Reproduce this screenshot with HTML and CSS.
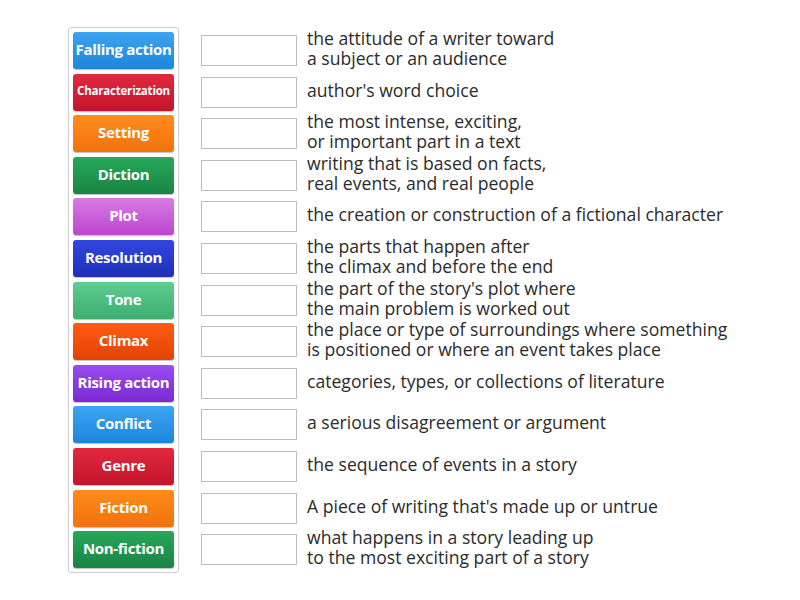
FILE: index.html
```html
<!DOCTYPE html>
<html>
<head>
<meta charset="utf-8">
<link rel="stylesheet" href="styles.css">
</head>
<body>
<div class="game">
  <div class="panel">
    <div class="tile c-blue">Falling action</div>
    <div class="tile c-red small">Characterization</div>
    <div class="tile c-orange">Setting</div>
    <div class="tile c-green">Diction</div>
    <div class="tile c-violet">Plot</div>
    <div class="tile c-navy">Resolution</div>
    <div class="tile c-mint">Tone</div>
    <div class="tile c-redorange">Climax</div>
    <div class="tile c-purple">Rising action</div>
    <div class="tile c-blue">Conflict</div>
    <div class="tile c-red">Genre</div>
    <div class="tile c-orange">Fiction</div>
    <div class="tile c-green">Non-fiction</div>
  </div>
  <div class="rows">
    <div class="row"><div class="slot"></div><div class="desc">the attitude of a writer toward<br>a subject or an audience</div></div>
    <div class="row"><div class="slot"></div><div class="desc">author's word choice</div></div>
    <div class="row"><div class="slot"></div><div class="desc">the most intense, exciting,<br>or important part in a text</div></div>
    <div class="row"><div class="slot"></div><div class="desc">writing that is based on facts,<br>real events, and real people</div></div>
    <div class="row"><div class="slot"></div><div class="desc">the creation or construction of a fictional character</div></div>
    <div class="row"><div class="slot"></div><div class="desc">the parts that happen after<br>the climax and before the end</div></div>
    <div class="row"><div class="slot"></div><div class="desc">the part of the story's plot where<br>the main problem is worked out</div></div>
    <div class="row"><div class="slot"></div><div class="desc">the place or type of surroundings where something<br>is positioned or where an event takes place</div></div>
    <div class="row"><div class="slot"></div><div class="desc">categories, types, or collections of literature</div></div>
    <div class="row"><div class="slot"></div><div class="desc">a serious disagreement or argument</div></div>
    <div class="row"><div class="slot"></div><div class="desc">the sequence of events in a story</div></div>
    <div class="row"><div class="slot"></div><div class="desc">A piece of writing that's made up or untrue</div></div>
    <div class="row"><div class="slot"></div><div class="desc">what happens in a story leading up<br>to the most exciting part of a story</div></div>
  </div>
</div>
</body>
</html>
```

FILE: styles.css
```css
html, body {
  margin: 0;
  padding: 0;
  background: #ffffff;
}

.game {
  display: flex;
  align-items: flex-start;
  padding: 27px 0 0 68px;
  font-family: "Open Sans", "Liberation Sans", sans-serif;
}

.panel {
  width: 101px;
  padding: 4px;
  border: 1px solid #cfcfcf;
  border-radius: 3px;
  display: flex;
  flex-direction: column;
  gap: 4.6px;
  box-shadow: 0 1px 2px rgba(0,0,0,0.08);
}

.tile {
  height: 37px;
  box-sizing: border-box;
  padding-bottom: 3px;
  border-radius: 3px;
  display: flex;
  align-items: center;
  justify-content: center;
  color: #ffffff;
  font-weight: 700;
  font-size: 15px;
  letter-spacing: -0.3px;
  white-space: nowrap;
  box-shadow: 0 1px 1px rgba(0,0,0,0.25);
}

.tile.small {
  font-size: 11.5px;
  letter-spacing: -0.2px;
}

.c-blue { background: linear-gradient(#3ea4f0, #1c86dc); }
.c-red { background: linear-gradient(#e2283e, #c2152c); }
.c-orange { background: linear-gradient(#ff8c1c, #f2720c); }
.c-green { background: linear-gradient(#27a85a, #1a8444); }
.c-violet { background: linear-gradient(#d87ae6, #bc46cc); }
.c-navy { background: linear-gradient(#3246e0, #1e30b8); }
.c-mint { background: linear-gradient(#60cc90, #3cae70); }
.c-redorange { background: linear-gradient(#ff5c14, #e24202); }
.c-purple { background: linear-gradient(#9a4cf0, #7a2ad0); }

.rows {
  margin-left: 22px;
  padding-top: 5px;
  display: flex;
  flex-direction: column;
  gap: 4.6px;
}

.row {
  height: 37px;
  display: flex;
  align-items: center;
}

.slot {
  width: 94px;
  height: 29px;
  border: 1px solid #bdbdbd;
  background: #ffffff;
  flex: none;
}

.desc {
  margin-left: 10px;
  margin-bottom: 5px;
  font-size: 17.6px;
  line-height: 20px;
  color: #2b2b2b;
  white-space: nowrap;
}
```
